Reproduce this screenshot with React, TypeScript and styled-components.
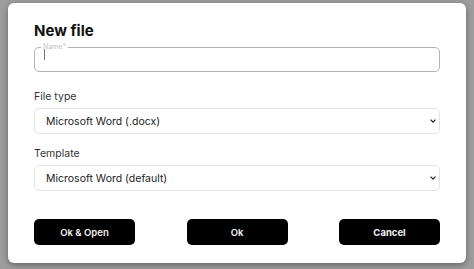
import React from 'react';
import styled, { createGlobalStyle } from 'styled-components';

const Global = createGlobalStyle`
  html, body {
    margin: 0;
    padding: 0;
    background: #9d9d9d;
    font-family: Inter, "Liberation Sans", sans-serif;
  }
`;

const Page = styled.div`
  width: 474px;
  height: 269px;
  padding: 3px 8px 0 8px;
  box-sizing: border-box;
`;

const Dialog = styled.div`
  width: 458px;
  height: 260px;
  box-sizing: border-box;
  background: #ffffff;
  border-radius: 6px;
  box-shadow: 0 2px 6px rgba(0, 0, 0, 0.35);
  padding: 19px 26px 0 26px;
  display: flex;
  flex-direction: column;
`;

const Title = styled.h2`
  margin: 0;
  font-size: 15px;
  line-height: 18px;
  font-weight: 700;
  color: #111;
`;

const NameField = styled.fieldset`
  margin: 3px 0 0 0;
  padding: 0 9px;
  height: 29px;
  box-sizing: border-box;
  border: 1px solid #b3b3b3;
  border-radius: 5px;
  display: flex;
  align-items: center;
`;

const Legend = styled.legend`
  font-size: 7px;
  line-height: 8px;
  color: #c4c4c4;
  padding: 0 2px;
  margin-left: -3px;
`;

const Caret = styled.span`
  display: block;
  width: 1px;
  height: 11px;
  background: #777;
  margin-top: -2px;
`;

const Label = styled.div<{ $top: number }>`
  margin-top: ${p => p.$top}px;
  font-size: 10.5px;
  line-height: 14px;
  color: #333;
`;

const SelectWrap = styled.div`
  position: relative;
  margin-top: 4px;
  height: 26px;
`;

const Select = styled.select`
  appearance: none;
  -webkit-appearance: none;
  height: 26px;
  width: 100%;
  box-sizing: border-box;
  border: 1px solid #e4e4e4;
  border-radius: 5px;
  background: #fff;
  padding: 0 20px 0 11px;
  font-family: Inter, "Liberation Sans", sans-serif;
  font-size: 10.5px;
  color: #222;
  outline: none;
`;

const Chevron = styled.svg`
  position: absolute;
  right: 4px;
  top: 11px;
  width: 6px;
  height: 4px;
  pointer-events: none;
`;

const Actions = styled.div`
  margin-top: 28px;
  display: flex;
  justify-content: space-between;
`;

const Button = styled.button<{ $weight?: number }>`
  width: 101px;
  height: 26px;
  border: none;
  border-radius: 5px;
  background: #000;
  color: #f2f2f2;
  font-family: Inter, "Liberation Sans", sans-serif;
  font-size: 9.5px;
  font-weight: ${p => p.$weight ?? 600};
  cursor: pointer;
`;

const Dropdown: React.FC<{ value: string; label: string }> = ({ value, label }) => (
  <SelectWrap>
    <Select defaultValue={value}>
      <option value={value}>{label}</option>
    </Select>
    <Chevron viewBox="0 0 6 4">
      <path d="M0.6 0.6 L3 3.1 L5.4 0.6" fill="none" stroke="#222" strokeWidth="1.2" />
    </Chevron>
  </SelectWrap>
);

export default function App() {
  return (
    <>
      <Global />
      <Page>
        <Dialog>
          <Title>New file</Title>
          <NameField>
            <Legend>Name*</Legend>
            <Caret />
          </NameField>
          <Label $top={18}>File type</Label>
          <Dropdown value="docx" label="Microsoft Word (.docx)" />
          <Label $top={13}>Template</Label>
          <Dropdown value="default" label="Microsoft Word (default)" />
          <Actions>
            <Button>Ok &amp; Open</Button>
            <Button>Ok</Button>
            <Button $weight={700}>Cancel</Button>
          </Actions>
        </Dialog>
      </Page>
    </>
  );
}
